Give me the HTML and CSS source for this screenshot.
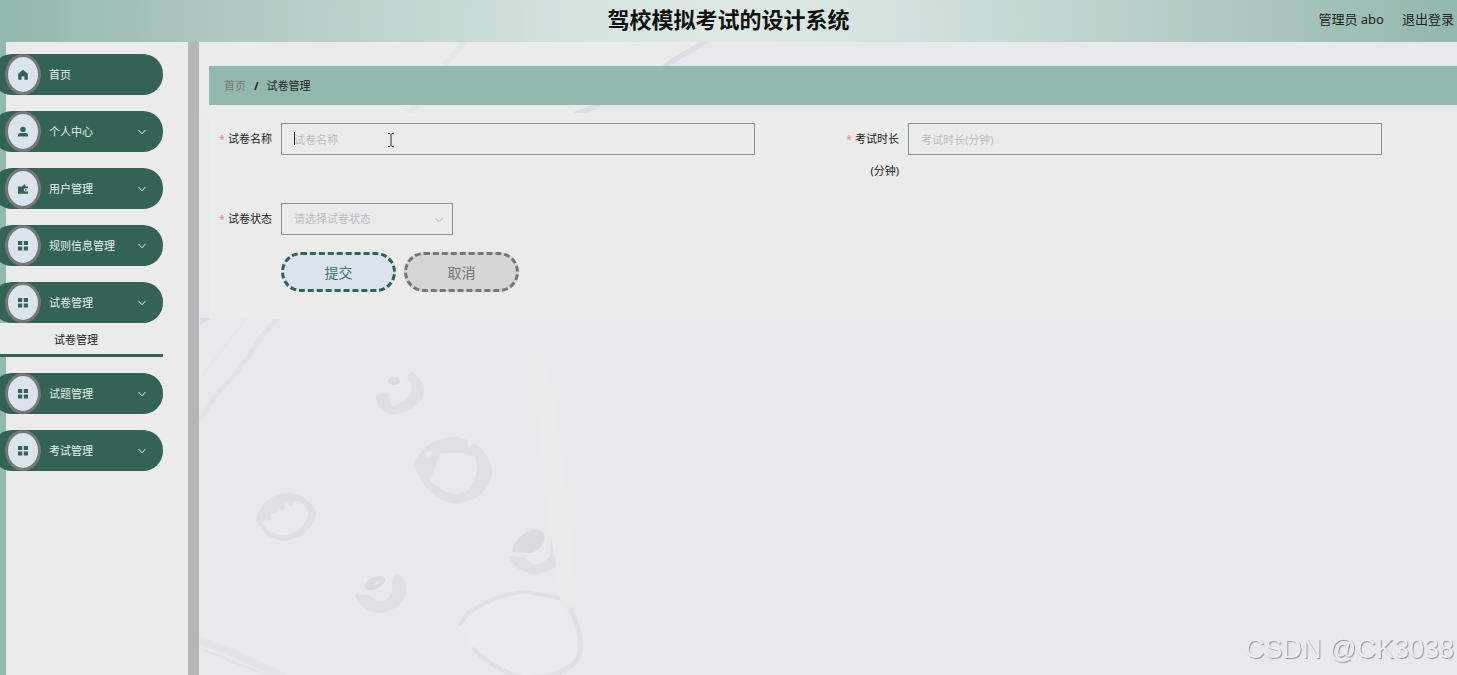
FILE: index.html
```html
<!DOCTYPE html>
<html lang="zh-CN">

<head>
    <meta charset="UTF-8">
    <meta name="viewport" content="width=device-width, initial-scale=1.0">
    <title>驾校模拟考试的设计系统</title>
    <link rel="stylesheet" href="styles.css">
</head>

<body>
    <svg class="sprite" width="0" height="0" aria-hidden="true">
        <symbol id="icon-home" viewBox="0 0 12 12">
            <path d="M6 .8 1.200 4.800V10.800H4.600V7.400h2.800V10.800H10.800V4.800z" />
        </symbol>
        <symbol id="icon-user" viewBox="0 0 12 12">
            <circle cx="6" cy="3.400" r="2.700" />
            <path d="M1 10.500V9Q1 7 3.200 7H8.800Q11 7 11 9V10.500z" />
        </symbol>
        <symbol id="icon-wallet" viewBox="0 0 12 12">
            <path d="M1 3.500H5L7.400 1.200 9 3.500H11V5.300H8.500a1.600 1.600 0 0 0 0 3.200H11V10.700H1z" />
            <circle cx="8.800" cy="6.900" r=".8" />
        </symbol>
        <symbol id="icon-grid" viewBox="0 0 12 12">
            <path d="M1 1h4.200v4H1zM6.800 1H11v4H6.800zM1 6.500h4.200v4H1zM6.800 6.500H11v4H6.800z" />
        </symbol>
        <symbol id="icon-arrow" viewBox="0 0 10 10">
            <path d="M1.500 3 5 6.800 8.500 3" fill="none" stroke="currentColor" />
        </symbol>
    </svg>

    <header class="header">
        <h1>驾校模拟考试的设计系统</h1>
        <div class="header-user">
            <span>管理员 abo</span>
            <a href="#">退出登录</a>
        </div>
    </header>

    <div class="container">
        <aside class="sidebar">
            <nav class="menu">
                <a class="menu-item" href="#">
                    <span class="menu-icon"><svg><use href="#icon-home" /></svg></span>首页
                </a>
                <a class="menu-item" href="#">
                    <span class="menu-icon"><svg><use href="#icon-user" /></svg></span>个人中心
                    <svg class="arrow"><use href="#icon-arrow" /></svg>
                </a>
                <a class="menu-item" href="#">
                    <span class="menu-icon"><svg><use href="#icon-wallet" /></svg></span>用户管理
                    <svg class="arrow"><use href="#icon-arrow" /></svg>
                </a>
                <a class="menu-item" href="#">
                    <span class="menu-icon"><svg><use href="#icon-grid" /></svg></span>规则信息管理
                    <svg class="arrow"><use href="#icon-arrow" /></svg>
                </a>
                <div class="menu-group">
                    <a class="menu-item" href="#">
                        <span class="menu-icon"><svg><use href="#icon-grid" /></svg></span>试卷管理
                        <svg class="arrow"><use href="#icon-arrow" /></svg>
                    </a>
                    <a class="submenu-item" href="#">试卷管理</a>
                </div>
                <a class="menu-item" href="#">
                    <span class="menu-icon"><svg><use href="#icon-grid" /></svg></span>试题管理
                    <svg class="arrow"><use href="#icon-arrow" /></svg>
                </a>
                <a class="menu-item" href="#">
                    <span class="menu-icon"><svg><use href="#icon-grid" /></svg></span>考试管理
                    <svg class="arrow"><use href="#icon-arrow" /></svg>
                </a>
            </nav>
        </aside>

        <main class="main">
            <!-- water drops behind the content -->
            <svg class="backdrop" width="520" height="633" viewBox="199 42 520 633" aria-hidden="true">
                <path d="M199 42H708L664 66 575 113H199z" fill="#ebebeb" />
                <path d="M534 350Q538 460 560 600L576 606Q566 440 542 350z" fill="#eaeaeb" />
                <g fill="none" stroke="#e1e3e8">
                    <path d="M708 40 664 66M600 105 575 114" stroke="#dddee5" stroke-width="5" />
                    <path d="M464 42 444 66M418 105 408 113" stroke="#e5e6e8" stroke-width="6" />
                    <path d="M278 317Q262 335 250 354 238 372 228 382 212 398 200 420" stroke-width="5" />
                    <path d="M246 319 202 376" stroke="#e4e6ea" stroke-width="2" />
                    <path d="M200 318 212 318 200 325z" fill="#dcdde8" stroke="none" />
                    <path d="M198 640Q230 650 290 680" stroke="#e4e5e9" stroke-width="8" />
                    <path d="M201 649 266 675" stroke-width="2" />
                </g>
                <g fill="#dde1e5">
                    <path d="M411 371Q426 382 424 392Q420 408 400 413Q388 416 383 411Q375 404 376 395L389 392 391 407 405 400Q413 394 412 384L407 378z" />
                    <path fill-rule="evenodd" d="M413 466Q424 437 456 437Q488 442 492 472Q488 501 456 503Q434 502 423 482zM440 454 430 482 440 488Q454 499 468 490Q482 470 474 456Q460 450 440 454z" />
                    <path fill-rule="evenodd" d="M256 521Q262 494 289 493Q312 496 316 514Q310 538 284 541Q266 540 256 521zM262 521Q268 536 286 535Q304 532 308 514Q306 502 296 501L291 506 286 502 284 510 278 507 276 514 270 513 271 520z" />
                    <path d="M551 535 556 566Q538 580 521 570Q512 566 508 556L524 557 534 565Q544 564 550 556z" />
                    <path d="M396 573Q408 578 406 594Q400 611 378 613Q360 611 355 594L370 595Q376 603 384 601Q394 594 392 582z" />
                </g>
                <path d="M460 624Q464 612 474 608Q500 592 528 592L558 600Q584 632 579 656Q560 680 520 677Q496 672 474 650z" fill="#eaebec" />
                <g fill="none" stroke="#dde1e5" stroke-linecap="round">
                    <path d="M460 624 468 613Q500 592 528 592L558 598" stroke-width="4" />
                    <path d="M571 610Q584 636 579 656Q566 680 520 677Q496 670 474 650" stroke-width="5" />
                </g>
                <g fill="#d8dbe0">
                    <ellipse cx="394" cy="381" rx="6" ry="4" />
                    <path d="M512 552Q514 536 532 530Q542 528 545 537Q544 548 532 553z" />
                    <ellipse cx="375" cy="583" rx="11" ry="6" transform="rotate(-24 375 583)" />
                </g>
                <circle cx="429" cy="454" r="3" fill="#e8e9ed" />
                <path d="M466 436 469 448 476 440z" fill="#e8e9ed" />
                <circle cx="377" cy="583" r="2" fill="#e3e5e8" />
            </svg>

            <nav class="breadcrumb">
                <a href="#">首页</a>
                <span class="separator">/</span>
                <span>试卷管理</span>
            </nav>

            <form class="exam-form">
                <div class="form-group">
                    <label for="exam-name">试卷名称</label>
                    <div class="field active">
                        <input type="text" id="exam-name" name="exam_name" placeholder="试卷名称">
                        <svg class="pointer" width="8" height="14" viewBox="0 0 8 14" aria-hidden="true">
                            <path d="M1 .5H3L4 1.500 5 .5H7M4 1.500V12.500M1 13.500H3L4 12.500 5 13.500H7" fill="none" stroke="#333" />
                        </svg>
                    </div>
                </div>
                <div class="form-group">
                    <label for="exam-time">考试时长(分钟)</label>
                    <div class="field">
                        <input type="text" id="exam-time" name="exam_time" placeholder="考试时长(分钟)">
                    </div>
                </div>
                <div class="form-group">
                    <label for="exam-status">试卷状态</label>
                    <div class="field select">
                        <select id="exam-status" name="exam_status">
                            <option value="">请选择试卷状态</option>
                        </select>
                        <svg class="arrow"><use href="#icon-arrow" /></svg>
                    </div>
                </div>
                <div class="form-actions">
                    <button type="submit" class="btn btn-submit">提交</button>
                    <button type="button" class="btn btn-cancel">取消</button>
                </div>
            </form>
        </main>
    </div>

    <div class="watermark">CSDN @CK3038</div>
</body>

</html>
```

FILE: styles.css
```css
* {
    box-sizing: border-box;
}

body {
    font-family: "Noto Sans", "Noto Sans CJK SC", sans-serif;
    font-size: 11px;
    line-height: 16px;
    color: #222;
    background-color: #e8e9ed;
    margin: 0;
    min-height: 100vh;
    display: flex;
    flex-direction: column;
}

a {
    color: inherit;
    text-decoration: none;
}

.sprite {
    position: absolute;
}

.header {
    display: grid;
    grid-template-columns: 1fr auto 1fr;
    align-items: center;
    height: 42px;
    padding: 0 3px 5px;
    background: radial-gradient(circle at 50% 50%, #dfe9e6 0%, #d5e3df 20%, #93b8ad 100%);
}

.header h1 {
    grid-column: 2;
    margin: 0;
    font-size: 22px;
    line-height: 32px;
    color: #111;
}

.header-user {
    display: flex;
    justify-content: flex-end;
    gap: 18px;
    font-size: 13px;
}

.container {
    flex: 1;
    display: flex;
}

.sidebar {
    flex: none;
    width: 199px;
    padding-top: 12px;
    background-color: #ebebeb;
    border-left: 6px solid #93b8ad;
    border-right: 11px solid #b5b5b5;
}

.menu {
    display: flex;
    flex-direction: column;
    gap: 16px;
    margin: 0 25px 0 -14px;
}

.menu-item {
    display: flex;
    align-items: center;
    height: 41px;
    padding: 0 16px 0 13px;
    border-radius: 20px;
    background-color: #336357;
    color: #e8eeec;
}

.menu-icon {
    display: flex;
    align-items: center;
    justify-content: center;
    width: 36px;
    height: 41px;
    margin-right: 8px;
    border: 3px solid #777;
    border-radius: 50%;
    background-color: #dbe3ed;
}

.menu-icon svg {
    width: 12px;
    height: 12px;
    fill: #336357;
}

.arrow {
    width: 10px;
    height: 10px;
    margin-left: auto;
}

.submenu-item {
    display: block;
    height: 34px;
    padding: 9px 0 0 62px;
    background-color: #ebebeb;
    border-bottom: 3px solid #336357;
}

.main {
    position: relative;
    flex: 1;
    min-width: 0;
    padding: 24px 0 0 10px;
}

.backdrop {
    position: absolute;
    top: 0;
    left: 0;
    z-index: -1;
}

.breadcrumb {
    display: flex;
    align-items: center;
    gap: 8px;
    height: 39px;
    padding: 0 15px;
    margin-bottom: 8px;
    background-color: #93b8ad;
}

.breadcrumb a {
    color: #777;
}

.separator {
    font-weight: bold;
}

.exam-form {
    display: grid;
    grid-template-columns: 1fr 1fr;
    gap: 16px 6px;
    padding: 10px 0 27px;
    background-color: #ebebeb;
}

.form-group {
    display: flex;
    align-items: flex-start;
    gap: 9px;
    padding-right: 75px;
}

.form-group label {
    flex: none;
    width: 63px;
    line-height: 32px;
    text-align: right;
}

.form-group label::before {
    content: "*";
    margin-right: 3px;
    color: #ec8f89;
}

.field {
    position: relative;
    flex: 1;
}

.field.active::before {
    content: "";
    position: absolute;
    top: 9px;
    left: 13px;
    width: 1px;
    height: 13px;
    background-color: #222;
}

.field.select {
    flex: none;
    width: 172px;
}

input,
select {
    display: block;
    width: 100%;
    height: 32px;
    padding: 0 12px;
    border: 1px solid #8f9094;
    border-radius: 0;
    outline: none;
    appearance: none;
    background-color: transparent;
    font: inherit;
    color: #222;
}

select,
input::placeholder {
    color: #b9bbc3;
}

.field .arrow {
    position: absolute;
    top: 12px;
    right: 9px;
    color: #b9bbc3;
}

.pointer {
    position: absolute;
    top: 10px;
    left: 106px;
}

.form-actions {
    grid-column: 1 / -1;
    display: flex;
    gap: 8px;
    padding: 1px 0 0 72px;
}

.btn {
    width: 115px;
    height: 40px;
    border: 3px dashed #336357;
    border-radius: 20px;
    font-family: inherit;
    font-size: 14px;
    cursor: pointer;
}

.btn-submit {
    background-color: #dbe3ed;
    color: #47756a;
}

.btn-cancel {
    background-color: #d6d6d6;
    border-color: #777;
    color: #777;
}

.watermark {
    position: fixed;
    right: 3px;
    bottom: 10px;
    font-family: "Liberation Sans", sans-serif;
    font-size: 27px;
    line-height: 32px;
    color: #ececef;
    text-shadow: 1px 1px 1px #999;
}
```
